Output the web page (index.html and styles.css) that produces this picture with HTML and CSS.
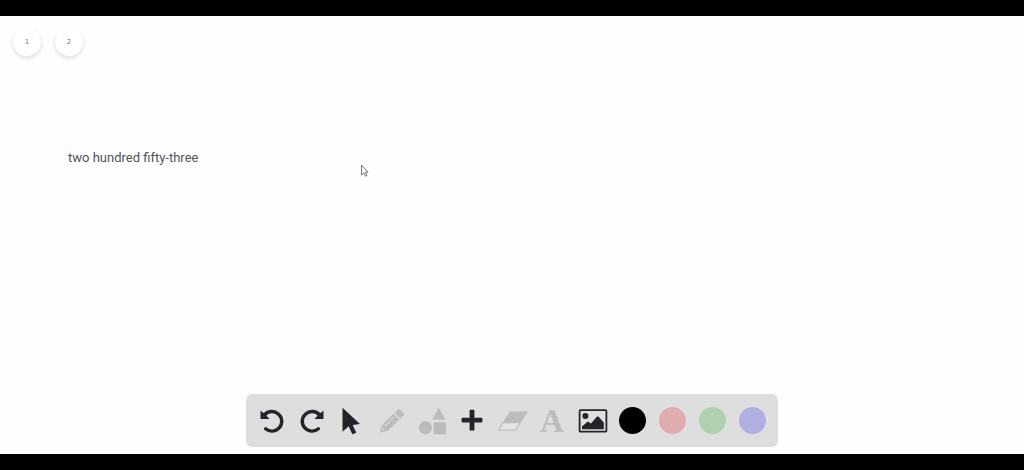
FILE: index.html
```html
<!DOCTYPE html>
<html lang="en">
<head>
    <meta charset="UTF-8">
    <meta name="viewport" content="width=device-width, initial-scale=1.0">
    <title>Whiteboard</title>
    <link rel="stylesheet" href="styles.css">
</head>
<body>
    <main class="board">
        <nav class="pages">
            <button class="page" type="button">1</button>
            <button class="page" type="button">2</button>
        </nav>

        <!-- Items placed on the canvas -->
        <p class="note">two hundred fifty-three</p>
        <svg class="pointer" viewBox="0 0 10 14" aria-hidden="true">
            <path d="M1.5 1V11L4 8.8L5.6 12.2L7 11.5L5.5 8.2H8Z"/>
        </svg>

        <div class="toolbar">
            <button class="tool" type="button" aria-label="Undo">
                <svg viewBox="0 0 40 41">
                    <path class="line" d="M13.6 28.8A9.8 9.8 0 1 0 12.6 14.8"/>
                    <path d="M8.5 10.5L11.5 13L14.5 11.5L14.5 15.8L17.5 19H8.5Z"/>
                </svg>
            </button>
            <button class="tool" type="button" aria-label="Redo">
                <svg viewBox="0 0 40 41">
                    <path class="line" d="M26.4 28.8A9.8 9.8 0 1 1 27.4 14.8"/>
                    <path d="M31.5 10.5L28.5 13L25.5 11.5L25.5 15.8L22.5 19H31.5Z"/>
                </svg>
            </button>
            <button class="tool" type="button" aria-label="Select">
                <svg viewBox="0 0 40 41">
                    <path d="M10.5 7.7L28 24L20.7 25L24.3 32.7L20.3 34.3L16.7 26.3L10.5 31.7Z"/>
                </svg>
            </button>
            <button class="tool faded" type="button" aria-label="Pencil">
                <svg viewBox="0 0 40 41">
                    <path d="M22.6 12.8L25.8 9.8Q27 8.8 28.2 9.8L31.4 13Q32.4 14.2 31.4 15.4L28.3 18.5Z"/>
                    <path fill-rule="evenodd" d="M21.6 13.8L27.4 19.5L15.7 31L8 32.4L9.6 25.4ZM22 16.4L12.6 25.5L13.3 26.2L22.7 17.1ZM10.8 27.8L10.2 30.3L12.7 29.7Z"/>
                </svg>
            </button>
            <button class="tool faded" type="button" aria-label="Shapes">
                <svg viewBox="0 0 40 41">
                    <path d="M26.7 7.7L33.2 19.8H20.1Z"/>
                    <circle cx="13.4" cy="27.7" r="6.6"/>
                    <rect x="21.7" y="22.3" width="12.2" height="12" rx="1"/>
                </svg>
            </button>
            <button class="tool" type="button" aria-label="Add">
                <svg viewBox="0 0 40 41">
                    <path d="M18.6 9.8H21.4Q22.4 9.8 22.4 10.8V17.8H29.4Q30.4 17.8 30.4 18.8V21.4Q30.4 22.4 29.4 22.4H22.4V29.6Q22.4 30.6 21.4 30.6H18.6Q17.6 30.6 17.6 29.6V22.4H10.6Q9.6 22.4 9.6 21.4V18.8Q9.6 17.8 10.6 17.8H17.6V10.8Q17.6 9.8 18.6 9.8Z"/>
                </svg>
            </button>
            <button class="tool faded" type="button" aria-label="Eraser">
                <svg viewBox="0 0 40 41">
                    <path d="M19 11.4H34.8Q36 11.6 35.2 12.8L28.4 23.2H10.4L17.2 12.4Q17.8 11.4 19 11.4Z"/>
                    <path class="edge" d="M10.8 22.6L7.2 28.8Q6.6 30.2 8 30.2H22.4Q23.6 30.2 24.2 29.2L28 22.6Z"/>
                </svg>
            </button>
            <button class="tool faded letter" type="button" aria-label="Text">A</button>
            <button class="tool" type="button" aria-label="Image">
                <svg viewBox="0 0 40 41">
                    <rect class="frame" x="7.6" y="10.1" width="26.8" height="21.6" rx="1"/>
                    <circle cx="13.4" cy="16" r="3"/>
                    <path d="M10 29.2V26.6L15.8 21.4L19 23.4L25 16.6Q25.8 16.2 26.6 16.8L31.8 22.4V29.2Z"/>
                </svg>
            </button>
            <button class="tool" type="button" aria-label="Black"><span class="swatch black"></span></button>
            <button class="tool" type="button" aria-label="Red"><span class="swatch red"></span></button>
            <button class="tool" type="button" aria-label="Green"><span class="swatch green"></span></button>
            <button class="tool" type="button" aria-label="Purple"><span class="swatch purple"></span></button>
        </div>
    </main>
</body>
</html>
```

FILE: styles.css
```css
* {
    box-sizing: border-box;
}

body {
    margin: 0;
    background-color: #000;
    font-family: Roboto, sans-serif;
}

.board {
    position: relative;
    display: flex;
    flex-direction: column;
    justify-content: space-between;
    min-height: calc(100vh - 32px);
    margin: 16px 0;
    padding: 12px 13px 7px;
    background-color: #fefefe;
}

button {
    border: none;
    padding: 0;
    cursor: pointer;
}

.pages {
    display: flex;
    gap: 14px;
}

.page {
    width: 28px;
    height: 28px;
    padding-bottom: 1px;
    border-radius: 50%;
    background-color: #fff;
    box-shadow: 0 2px 4px rgba(0, 0, 0, 0.14);
    color: #77778a;
    font-family: "DejaVu Sans", sans-serif;
    font-size: 7px;
}

.note {
    position: absolute;
    left: 68px;
    top: 132px;
    margin: 0;
    color: #50545a;
    font-size: 13px;
    line-height: 20px;
}

.pointer {
    position: absolute;
    left: 360px;
    top: 148px;
    width: 10px;
    height: 14px;
    fill: #fff;
    stroke: #777;
}

.toolbar {
    display: flex;
    align-self: center;
    padding: 6px;
    border-radius: 6px;
    background-color: #dedede;
}

.tool {
    display: flex;
    align-items: center;
    justify-content: center;
    width: 40px;
    height: 41px;
    background: none;
    color: #212529;
}

.tool svg {
    width: 40px;
    height: 41px;
    fill: currentColor;
}

.tool .line {
    fill: none;
    stroke: currentColor;
    stroke-width: 3.4;
    stroke-linecap: round;
}

.tool .frame {
    fill: none;
    stroke: currentColor;
    stroke-width: 1.8;
}

.tool .edge {
    fill: #e4e4e4;
    stroke: currentColor;
    stroke-width: 1.2;
}

.tool.faded {
    color: #bcbcbc;
}

.letter {
    font-family: "Liberation Serif", serif;
    font-size: 33px;
    font-weight: bold;
    line-height: 40px;
}

.swatch {
    width: 27px;
    height: 27px;
    border-radius: 50%;
}

.black {
    background-color: #000;
}

.red {
    background-color: #e0acb0;
}

.green {
    background-color: #b0d0b0;
}

.purple {
    background-color: #b0afe2;
}
```
